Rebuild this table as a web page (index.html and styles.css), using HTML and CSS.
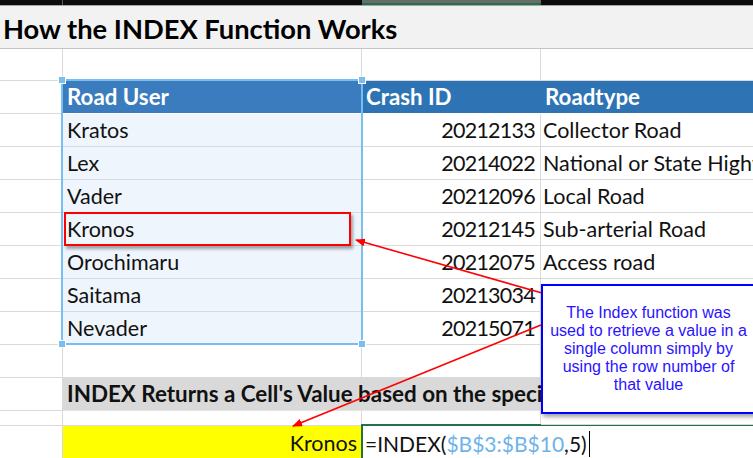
FILE: index.html
```html
<!DOCTYPE html>
<html>
<head>
<meta charset="utf-8">
<link rel="stylesheet" href="styles.css">
</head>
<body>
<div class="sheet">
  <div class="topbar">
    <div class="tb tb-a"></div>
    <div class="tb tb-b"></div>
    <div class="tb tb-c"></div>
    <div class="tb tb-d"></div>
  </div>
  <div class="grid">
    <div class="title">How the INDEX Function Works</div>

    <div class="cell r-blank a"></div><div class="cell r-blank"></div><div class="cell r-blank"></div><div class="cell r-blank d"></div>

    <div class="cell a"></div>
    <div class="cell hdr hdr-b">Road User</div>
    <div class="cell hdr">Crash ID</div>
    <div class="cell hdr d">Roadtype</div>

    <div class="cell a"></div><div class="cell sel">Kratos</div><div class="cell num">20212133</div><div class="cell txt d">Collector Road</div>
    <div class="cell a"></div><div class="cell sel">Lex</div><div class="cell num">20214022</div><div class="cell txt d">National or State Highway</div>
    <div class="cell a"></div><div class="cell sel">Vader</div><div class="cell num">20212096</div><div class="cell txt d">Local Road</div>
    <div class="cell a"></div><div class="cell sel">Kronos</div><div class="cell num">20212145</div><div class="cell txt d">Sub-arterial Road</div>
    <div class="cell a"></div><div class="cell sel">Orochimaru</div><div class="cell num">20212075</div><div class="cell txt d">Access road</div>
    <div class="cell a"></div><div class="cell sel">Saitama</div><div class="cell num">20213034</div><div class="cell txt d"></div>
    <div class="cell a"></div><div class="cell sel">Nevader</div><div class="cell num">20215071</div><div class="cell txt d"></div>

    <div class="cell a"></div><div class="cell"></div><div class="cell"></div><div class="cell d"></div>

    <div class="cell a"></div>
    <div class="cell gray">INDEX Returns a Cell's Value based on the specified row number</div>

    <div class="cell short a"></div><div class="cell short"></div><div class="cell short"></div><div class="cell short d"></div>

    <div class="cell a"></div>
    <div class="cell yellow">Kronos</div>
    <div class="cell edit">=INDEX(<span class="ref">$B$3:$B$10</span>,5)<span class="caret"></span></div>
  </div>

  <div class="selection">
    <span class="handle h-tl"></span><span class="handle h-tr"></span>
    <span class="handle h-bl"></span><span class="handle h-br"></span>
  </div>
  <div class="redbox"></div>

  <svg class="arrows" width="753" height="458" viewBox="0 0 753 458">
    <defs>
      <marker id="ah" markerWidth="10" markerHeight="8" refX="9" refY="4" orient="auto" markerUnits="userSpaceOnUse">
        <path d="M0,0 L10,4 L0,8 Z" fill="#ff0000"/>
      </marker>
    </defs>
    <line x1="542" y1="293" x2="356" y2="240" stroke="#ff0000" stroke-width="1.6" marker-end="url(#ah)"/>
    <line x1="541" y1="325" x2="293" y2="426" stroke="#ff0000" stroke-width="1.6" marker-end="url(#ah)"/>
  </svg>

  <div class="callout">The Index function was<br>used to retrieve a value in a<br>single column simply by<br>using the row number of<br>that value</div>
</div>
</body>
</html>
```

FILE: styles.css
```css
* { box-sizing: border-box; }
html, body { margin: 0; padding: 0; background: #ffffff; }
body { width: 753px; height: 458px; overflow: hidden; }

.sheet {
  position: relative;
  width: 753px;
  height: 458px;
  overflow: hidden;
  font-family: Lato, "Open Sans", sans-serif;
  color: #111111;
}

.topbar {
  display: grid;
  grid-template-columns: 63px 299px 179px 212px;
  height: 6px;
  border-bottom: 1px solid #a6a6a6;
  background: #0c0c0c;
}
.tb-a { border-right: 1px solid #5a5a5a; }
.tb-c { background: #6b6b6b; border-bottom: 2px solid #217346; }

.grid {
  display: grid;
  grid-template-columns: 63px 299px 179px 212px;
  grid-template-rows: 43px 32px 33px repeat(7, 33px) 33px 33px 15px 33px;
}

.title {
  grid-column: 1 / -1;
  background: #f2f2f2;
  border-bottom: 1px solid #c4c4c4;
  font-weight: 700;
  font-size: 27.3px;
  padding-left: 3px;
  display: flex;
  align-items: flex-end;
  padding-bottom: 3px;
  white-space: nowrap;
  color: #000;
}

.cell {
  border-right: 1px solid #dadada;
  border-bottom: 1px solid #dadada;
  font-size: 21.5px;
  display: flex;
  align-items: flex-end;
  padding-bottom: 3px;
  white-space: nowrap;
  min-width: 0;
}
.cell.d { border-right: none; }

.hdr {
  background: #2e74b5;
  color: #ffffff;
  font-weight: 700;
  font-size: 22.3px;
  padding-left: 4px;
  border-right: none;
  border-bottom: 1px solid #ffffff;
  padding-bottom: 3px;
}
.hdr-b { background: #3a7cbe; }

.sel {
  background: #eef5fc;
  border-bottom-color: #d3dae4;
  padding-left: 4px;
}
.num { justify-content: flex-end; padding-right: 5px; letter-spacing: -0.75px; }
.txt { padding-left: 2px; overflow: hidden; }

.gray {
  grid-column: 2 / -1;
  background: #d9d9d9;
  font-weight: 700;
  font-size: 22.4px;
  padding-left: 4px;
  border-right: none;
  border-bottom-color: #e4e4e4;
  overflow: hidden;
  padding-bottom: 3px;
}

.short { padding: 0; }

.yellow {
  background: #ffff00;
  justify-content: flex-end;
  padding-right: 4px;
  border-bottom: none;
}
.edit {
  grid-column: 3 / -1;
  border-top: 2px solid #217346;
  border-left: 2px solid #217346;
  border-right: none;
  border-bottom: none;
  margin-top: -2px;
  margin-left: -1px;
  padding-left: 2px;
  color: #111;
  font-size: 21px;
  position: relative;
}
.edit::after {
  content: "";
  position: absolute;
  left: 178px;
  top: -2px;
  right: 0;
  border-top: 1px solid #dadada;
}
.ref { color: #6db3ea; }
.caret {
  display: inline-block;
  width: 1px;
  height: 26px;
  background: #000;
  margin-left: 2px;
  align-self: flex-end;
  margin-bottom: -1px;
}

.selection {
  position: absolute;
  left: 61px;
  top: 79px;
  width: 302px;
  height: 266px;
  border: 2px solid #7abef0;
  pointer-events: none;
}
.handle {
  position: absolute;
  width: 6px;
  height: 6px;
  background: #7abef0;
  outline: 1px solid #ffffff;
}
.h-tl { left: -4px; top: -4px; }
.h-tr { right: -4px; top: -4px; }
.h-bl { left: -4px; bottom: -4px; }
.h-br { right: -4px; bottom: -4px; }

.redbox {
  position: absolute;
  left: 64px;
  top: 212px;
  width: 287px;
  height: 34px;
  border: 2px solid #ff0000;
  box-shadow: 2px 3px 3px rgba(0, 0, 0, 0.35);
}

.arrows {
  position: absolute;
  left: 0;
  top: 0;
  pointer-events: none;
}

.callout {
  position: absolute;
  left: 541px;
  top: 284px;
  width: 215px;
  height: 130px;
  background: #ffffff;
  border: 2px solid #0000ff;
  box-shadow: 2px 3px 4px rgba(0, 0, 0, 0.35);
  font-family: "Liberation Sans", Arial, sans-serif;
  font-size: 16px;
  line-height: 18px;
  color: #2a12ff;
  text-align: center;
  white-space: nowrap;
  padding: 18px 0 0 0;
}
```
